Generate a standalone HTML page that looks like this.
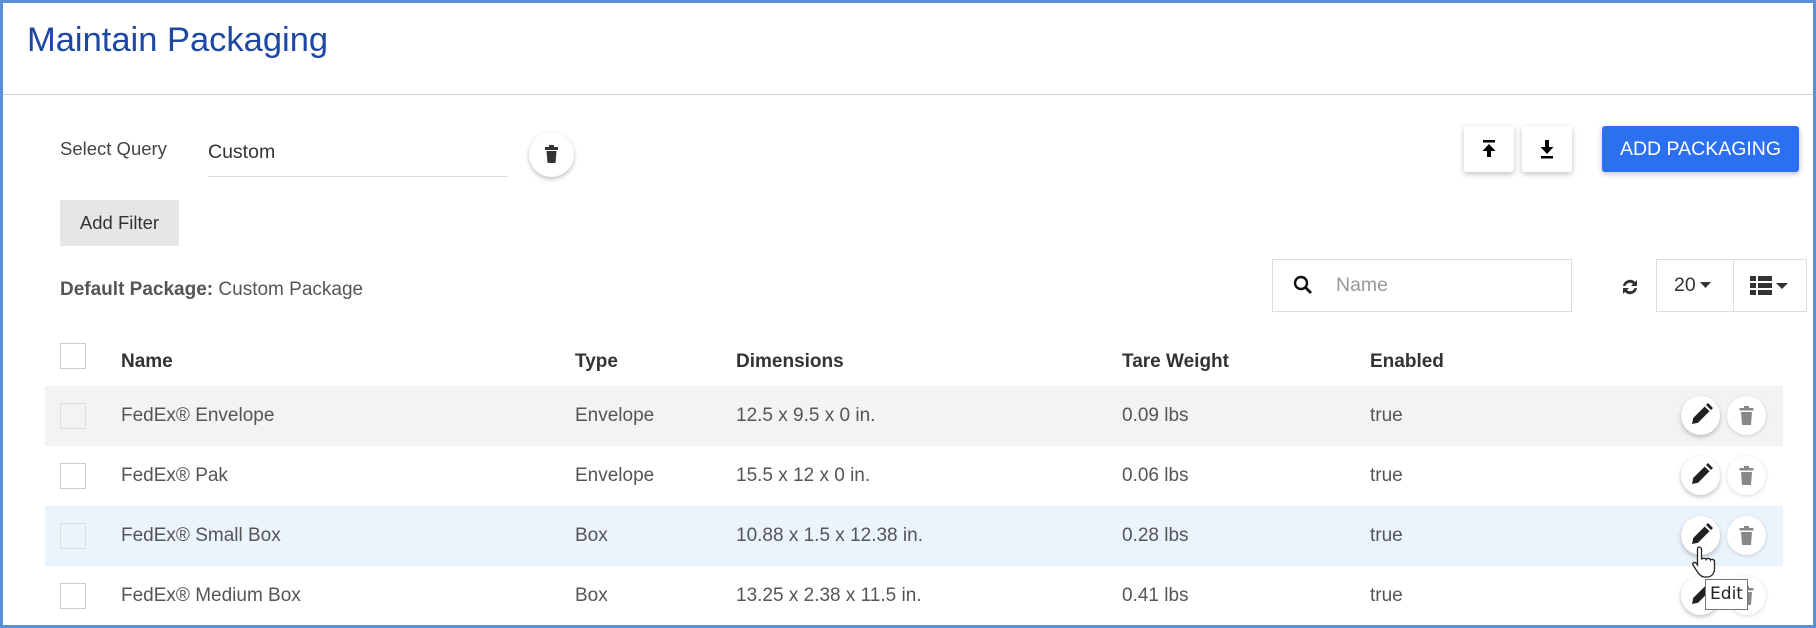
<!DOCTYPE html>
<html><head><meta charset="utf-8"><style>
*{box-sizing:border-box;margin:0;padding:0}
body{width:1816px;height:628px;overflow:hidden;background:#fff;font-family:"Liberation Sans",sans-serif;position:relative}
.frame{position:absolute;left:0;top:0;width:1816px;height:628px;border:3px solid #5b8fd6;pointer-events:none;z-index:10}
.a{position:absolute}
.title{left:27px;top:21px;font-size:34.5px;color:#1c47a3;white-space:nowrap}
.hline{left:3px;top:94px;width:1810px;height:1px;background:#d0d0d0}
.lbl{font-size:18.5px;color:#444;white-space:nowrap}
.cbtn{background:#fff;border-radius:50%;box-shadow:0 2px 5px rgba(0,0,0,.25)}
.sq{background:#fff;border-radius:3px;box-shadow:0 2px 6px rgba(0,0,0,.25)}
.row{left:45px;width:1738px;height:60px}
.cell{position:absolute;font-size:19px;color:#555;white-space:nowrap;line-height:20px}
.hd{position:absolute;font-size:19px;font-weight:bold;color:#333;white-space:nowrap;top:351px}
.cb{position:absolute;left:60px;width:26px;height:26px;border:1px solid #ccc;background:#fff}
</style></head><body>
<div class="frame"></div>
<div class="a title">Maintain Packaging</div>
<div class="a hline"></div>

<div class="a lbl" style="left:60px;top:138px">Select Query</div>
<div class="a" style="left:208px;top:141px;font-size:19.5px;color:#333">Custom</div>
<div class="a" style="left:208px;top:176px;width:300px;height:1px;background:#ddd"></div>
<div class="a cbtn" style="left:529px;top:132px;width:45px;height:45px">
<svg width="45" height="45" viewBox="0 0 45 45"><path d="M16 15h13v3H16zM20 13h5v2h-5zM17.5 19h10l-1 12h-8z" fill="#333"/></svg></div>

<div class="a" style="left:60px;top:200px;width:119px;height:46px;background:#e6e6e6;font-size:18.5px;color:#333;text-align:center;line-height:46px">Add Filter</div>

<div class="a" style="left:60px;top:279px;font-size:19px;color:#555;white-space:nowrap"><b style="color:#555">Default Package:</b> Custom Package</div>

<div class="a sq" style="left:1464px;top:126px;width:50px;height:46px"><svg width="50" height="46"><path d="M19 14h12v2.5H19zM25 18l-6.5 7h4.5v6h4v-6h4.5z" fill="#000"/></svg></div>
<div class="a sq" style="left:1522px;top:126px;width:50px;height:46px"><svg width="50" height="46"><path d="M23 14h4v7h4.5l-6.5 7-6.5-7h4.5zM19 30h12v2.5H19z" fill="#000"/></svg></div>
<div class="a" style="left:1602px;top:126px;width:197px;height:46px;background:#2a70f0;border-radius:3px;box-shadow:0 2px 6px rgba(0,0,0,.25);color:#fff;font-size:19.5px;text-align:center;line-height:46px">ADD PACKAGING</div>

<div class="a" style="left:1272px;top:259px;width:300px;height:53px;border:1px solid #ddd"></div>
<svg class="a" style="left:1292px;top:274px" width="22" height="22"><circle cx="9" cy="9" r="6" stroke="#111" stroke-width="2.4" fill="none"/><path d="M13 13l6 6" stroke="#111" stroke-width="2.8"/></svg>
<div class="a" style="left:1336px;top:274px;font-size:19.5px;color:#999">Name</div>
<svg class="a" style="left:1619px;top:275px" width="22" height="24" viewBox="0 0 22 22"><path d="M4 10a7 7 0 0 1 12-4l2-2v6h-6l2-2a4.5 4.5 0 0 0-7.5 2zM18 12a7 7 0 0 1-12 4l-2 2v-6h6l-2 2a4.5 4.5 0 0 0 7.5-2z" fill="#333"/></svg>
<div class="a" style="left:1656px;top:259px;width:151px;height:53px;border:1px solid #ddd"></div>
<div class="a" style="left:1733px;top:259px;width:1px;height:53px;background:#ddd"></div>
<div class="a" style="left:1674px;top:274px;font-size:19.5px;color:#333">20</div>
<svg class="a" style="left:1700px;top:281px" width="12" height="8"><path d="M0 1h11l-5.5 6z" fill="#333"/></svg>
<svg class="a" style="left:1750px;top:276px" width="40" height="20"><path d="M0 0h6v5H0zM8 0h14v5H8zM0 7h6v5H0zM8 7h14v5H8zM0 14h6v5H0zM8 14h14v5H8z" fill="#333"/><path d="M26 7h12l-6 6z" fill="#333"/></svg>

<div class="cb" style="top:343px"></div>
<div class="hd" style="left:121px">Name</div>
<div class="hd" style="left:575px">Type</div>
<div class="hd" style="left:736px">Dimensions</div>
<div class="hd" style="left:1122px">Tare Weight</div>
<div class="hd" style="left:1370px">Enabled</div>

<div class="a row" style="top:386px;background:#f3f3f3"></div>
<div class="a row" style="top:506px;background:#ebf3fd"></div>

<div class="cb" style="top:403px;border-color:#ddd;background:#f3f3f3"></div>
<div class="cb" style="top:463px"></div>
<div class="cb" style="top:523px;border-color:#ddd;background:#ebf3fd"></div>
<div class="cb" style="top:583px"></div>

<div class="cell" style="left:121px;top:406px">FedEx® Envelope</div><div class="cell" style="left:575px;top:406px">Envelope</div><div class="cell" style="left:736px;top:406px">12.5 x 9.5 x 0 in.</div><div class="cell" style="left:1122px;top:406px">0.09 lbs</div><div class="cell" style="left:1370px;top:406px">true</div>
<div class="cell" style="left:121px;top:466px">FedEx® Pak</div><div class="cell" style="left:575px;top:466px">Envelope</div><div class="cell" style="left:736px;top:466px">15.5 x 12 x 0 in.</div><div class="cell" style="left:1122px;top:466px">0.06 lbs</div><div class="cell" style="left:1370px;top:466px">true</div>
<div class="cell" style="left:121px;top:526px">FedEx® Small Box</div><div class="cell" style="left:575px;top:526px">Box</div><div class="cell" style="left:736px;top:526px">10.88 x 1.5 x 12.38 in.</div><div class="cell" style="left:1122px;top:526px">0.28 lbs</div><div class="cell" style="left:1370px;top:526px">true</div>
<div class="cell" style="left:121px;top:586px">FedEx® Medium Box</div><div class="cell" style="left:575px;top:586px">Box</div><div class="cell" style="left:736px;top:586px">13.25 x 2.38 x 11.5 in.</div><div class="cell" style="left:1122px;top:586px">0.41 lbs</div><div class="cell" style="left:1370px;top:586px">true</div>

<div class="a cbtn" style="left:1681px;top:396px;width:39px;height:39px"><svg width="39" height="39"><path d="M11 28l1.2-6 11.5-11.5 4.8 4.8L17 26.8z M25 9l2-2 5 5-2 2z" fill="#222"/></svg></div>
<div class="a cbtn" style="left:1727px;top:396px;width:39px;height:39px;box-shadow:0 1px 4px rgba(0,0,0,.15)"><svg width="39" height="39"><path d="M12.5 12h14v2.5h-14zM17 10h5v2h-5zM14 16h11l-1 13h-9z" fill="#888"/></svg></div>
<div class="a cbtn" style="left:1681px;top:456px;width:39px;height:39px"><svg width="39" height="39"><path d="M11 28l1.2-6 11.5-11.5 4.8 4.8L17 26.8z M25 9l2-2 5 5-2 2z" fill="#222"/></svg></div>
<div class="a cbtn" style="left:1727px;top:456px;width:39px;height:39px;box-shadow:0 1px 4px rgba(0,0,0,.15)"><svg width="39" height="39"><path d="M12.5 12h14v2.5h-14zM17 10h5v2h-5zM14 16h11l-1 13h-9z" fill="#888"/></svg></div>
<div class="a cbtn" style="left:1681px;top:516px;width:39px;height:39px"><svg width="39" height="39"><path d="M11 28l1.2-6 11.5-11.5 4.8 4.8L17 26.8z M25 9l2-2 5 5-2 2z" fill="#222"/></svg></div>
<div class="a cbtn" style="left:1727px;top:516px;width:39px;height:39px;box-shadow:0 1px 4px rgba(0,0,0,.15)"><svg width="39" height="39"><path d="M12.5 12h14v2.5h-14zM17 10h5v2h-5zM14 16h11l-1 13h-9z" fill="#888"/></svg></div>
<div class="a cbtn" style="left:1681px;top:576px;width:39px;height:39px"><svg width="39" height="39"><path d="M11 28l1.2-6 11.5-11.5 4.8 4.8L17 26.8z M25 9l2-2 5 5-2 2z" fill="#222"/></svg></div>
<div class="a cbtn" style="left:1727px;top:576px;width:39px;height:39px;box-shadow:0 1px 4px rgba(0,0,0,.15)"><svg width="39" height="39"><path d="M12.5 12h14v2.5h-14zM17 10h5v2h-5zM14 16h11l-1 13h-9z" fill="#888"/></svg></div>

<svg class="a" style="left:1690px;top:545px" width="30" height="34" viewBox="0 0 30 34"><path d="M9 2c1.5 0 2.5 1 2.5 2.5v10c.5-1.5 4-1.5 4.5 0 .5-1.5 4-1.5 4.5.5.5-1 4-1 4 1.5V24c0 4-3 8-7 8h-3c-3 0-5-2-7-5L3 20c-1-1.5 1-3.5 3-2l1.5 2V4.5C7.5 3 8 2 9 2z" fill="#fff" stroke="#222" stroke-width="1.3"/></svg>
<div class="a" style="left:1705px;top:579px;width:43px;height:31px;background:#fff;border:1px solid #767676;font-size:17px;color:#222;line-height:29px;text-align:center;font-family:'DejaVu Sans',sans-serif">Edit</div>
</body></html>
